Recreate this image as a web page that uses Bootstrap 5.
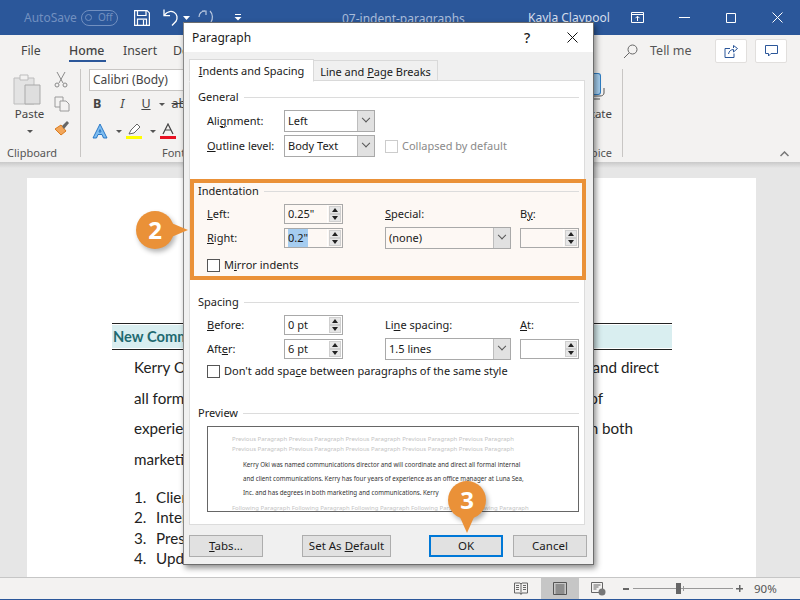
<!DOCTYPE html>
<html lang="en">
<head>
<meta charset="utf-8">
<title>Paragraph dialog</title>
<link rel="stylesheet" href="https://cdn.jsdelivr.net/npm/bootstrap@5.3.0/dist/css/bootstrap.min.css">
<style>
html,body{margin:0;height:100%;overflow:hidden}
body{font-family:"Noto Sans","Open Sans",sans-serif;font-size:11px;color:#222;background:#fff}
svg{display:block;flex:none}
.appwin{width:800px;height:600px;position:relative;overflow:hidden}
.titlebar{height:35px;background:#2b579a;color:#d5deec;font-size:12px}
.ts-auto{margin-left:24px;color:#7290c0;font-size:12px;width:57px}
.ts-toggle{width:37px;height:16px;border:1.5px solid #7290c0;border-radius:8px;color:#7290c0;font-size:10px;line-height:13px;padding-left:16px;position:relative}
.ts-toggle::before{content:"";position:absolute;left:3px;top:3px;width:7px;height:7px;border-radius:50%;border:1.5px solid #7290c0}
.ts-save{margin-left:16px}
.ts-undo{margin-left:13px}
.ts-drop{margin-left:3px}
.ts-redo{margin-left:7px}
.ts-more{margin-left:20px}
.ts-file{margin-left:100px;color:#a9bcd9;width:186px;white-space:nowrap;position:relative;top:1px}
.ts-user{width:103px;white-space:nowrap}
.ts-min{margin-left:35px}.ts-max{margin-left:36px}.ts-close{margin-left:36px}
.ribbon{height:127px;background:#f3f2f1;color:#444}
.ribtabs{height:34px;font-size:12.3px;padding-left:21px}
.ribtabs .nav-link{padding:0;color:#444;height:27px;line-height:31px;border-bottom:2px solid transparent;border-radius:0;background:none}
.ribtabs .tab-file{width:48px}
.ribtabs .tab-home{width:54px;border-bottom-color:transparent;position:relative;font-weight:500}
.ribtabs .tab-home::after{content:"";position:absolute;left:0;top:25px;width:37px;height:2px;background:#2b579a}
.ribtabs .tab-ins{width:50px}
.tellzone{margin-left:auto;padding-right:13px}
.tellme{margin-left:12px;width:57px;font-size:12.5px;color:#555}
.ribbtn{width:32px;height:24px;background:#fff;border:1px solid #e1dfdd;border-radius:2px;margin-left:8px}
.ribbody{height:88px}
.grp-clip{width:81px;border-right:1px solid #c8c6c4;padding-left:7px;flex:none}
.grp-font{width:509px;padding-left:8px;flex:none;overflow:hidden}
.grp-voice{width:33px;border-right:1px solid #c8c6c4;flex:none;text-align:right;padding-right:10px;position:relative;white-space:nowrap;direction:rtl}
.grp-rest{flex:1;padding-right:11px}
.grpname{font-size:11px;height:12px;line-height:16px;color:#555;white-space:nowrap}
.clip-top{height:76px;flex:none}
.paste-col{width:33px;margin-left:6px;text-align:center;margin-right:6px}
.paste-txt{font-size:11.5px;line-height:14px;margin-top:2px}
.tinytri{width:0;height:0;border-left:3.5px solid transparent;border-right:3.5px solid transparent;border-top:3.5px solid #555;display:inline-block}
.smalls{gap:8px;margin-left:2px;margin-top:3px}
.fontcombo{width:240px;height:22px;background:#fff;border:1px solid #c8c6c4;font-size:12px;line-height:20px;padding-left:3px;color:#444}
.fontrow1{height:24px;margin-top:1px;margin-left:4px;gap:0;font-size:12.5px}
.fontrow1 .fi{margin-left:19px}.fontrow1 .fu{margin-left:17px}.fontrow1 .tinytri{margin-left:8px}.fontrow1 .fs{margin-left:7px}
.fontrow2{margin-top:5px;margin-left:3px;height:20px}
.fb{font-weight:700}.fi{font-style:italic}
.fu{text-decoration:underline}
.fs{text-decoration:line-through}
.fontname{margin-top:4px;margin-left:73px}
.dictbtn{position:absolute;left:3px;top:4px;width:8px;height:22px;background:#a5cff0;border:1px solid #2f7ec4;border-radius:0 3px 3px 0;border-left:0}
.dictmark{position:absolute;left:3px;top:19px}
.dict-txt{margin-top:38px;font-size:11.5px;line-height:14px}
.voice-txt{margin-top:25px;font-size:11px;line-height:14px;color:#555}
.ribshadow{height:6px;background:linear-gradient(#c9c9c9,#e6e6e6);flex:none}
.docarea{height:409px;background:#e6e6e6;padding:10px 44px 0 27px}
.sheet{background:#fff;height:399px;overflow:hidden;padding-top:145px;font-family:Lato,"Liberation Sans",sans-serif;color:#222}
.dochead{margin-left:85px;width:560px;height:27px;border-top:1px solid #222;border-bottom:1px solid #222;padding-top:1px}
.dochead div{background:#d9eef0;height:23px;line-height:23px;color:#1f6a70;font-weight:700;font-size:14.7px;padding-left:1px}
.docpara{margin:2px 0 0 107px;width:525px;font-size:15.2px}
.docline{height:30.7px;line-height:30.7px}
.pad-of{margin-right:56px}.pad-both{margin-right:26px}
.doclist{margin:12px 0 0 107px;font-size:15.2px;padding:0;list-style:none}
.doclist li{height:20.4px;line-height:20.4px;display:flex}
.doclist b{font-weight:400;width:22px}
.statusbar{height:23px;background:#f3f2f1;border-top:1px solid #c6c6c6;border-bottom:1px solid #2b579a;font-size:11.5px;color:#555;padding-left:514px}
.viewsel{width:38px;height:21px;background:#c6c6c6;margin-left:13px;margin-right:12px}
.zminus{margin-left:17px}
.zslide{width:100px;height:1px;background:#999;margin:0 3px 0 4px;position:relative}
.zslide::before{content:"";position:absolute;left:43px;top:-5px;width:5px;height:11px;background:#666}
.zslide::after{content:"";position:absolute;left:50px;top:-2px;width:1px;height:5px;background:#999}
.zpct{margin-left:11px}
.dlg{position:absolute;left:183px;top:22px;width:411px;height:543px;background:#f0f0f0;border:1px solid #6d6d6d;border-left-color:#888;box-shadow:2px 3px 6px rgba(0,0,0,.45);color:#1a1a1a;font-size:11px}
.dlgtitle{height:29px;background:#fff;font-size:12px;padding-left:8px}
.dlghelp{margin-left:auto;font-size:14px;width:43px;font-weight:500}
.dlgclose{margin-right:15px}
.dlgtabs{margin:7px 0 0 5px;border:0;height:22px;flex-wrap:nowrap;position:relative;z-index:1}
.dlgtabs .nav-link{padding:0;font-size:11px;color:#1a1a1a;border:1px solid #d9d9d9;border-radius:0;background:#f0f0f0;height:21px;line-height:21px;margin:1px 0 0 -1px;width:125px;text-align:center}
.dlgtabs .nav-link.active{height:23px;margin-top:0;width:125px;margin-left:0;background:#fff;line-height:21px;border-color:#d9d9d9 #d9d9d9 #fff}
.dlgpanel{margin:-1px 0 0 5px;width:396px;height:445px;background:#fff;border:1px solid #dcdcdc;padding-top:8px}
.gsec{padding:0 5px 0 8px}
.ghead{height:16px;line-height:16px;white-space:nowrap}
.ghead::after{content:"";flex:1;height:1px;background:#dcdcdc;margin-left:5px}
.preview-head{margin-top:27px}
.frow{margin-left:9px;margin-top:4px;white-space:nowrap}
.frow.first{margin-top:5px}
.frow.tight{margin-top:3px}
.lab{width:77px;flex:none}
.colc{width:126px;margin-left:42px;flex:none}
.cold{width:59px;margin-left:9px;flex:none}
.sel{height:22px;border:1px solid #a9a9a9;background:#fff;padding-left:3px;line-height:20px;flex:none}
.colc.sel{margin-top:-1px;margin-bottom:-1px}
.sel1{width:91px}
.sel-arrow{width:17px;margin-left:auto;background:#e1e1e1;border-left:1px solid #bdbdbd;height:100%;flex:none}
.sel-arrow::before{content:"";width:6px;height:6px;border-right:1px solid #555;border-bottom:1px solid #555;transform:rotate(45deg) translate(-2px,-2px)}
.spin{width:59px;height:20px;border:1px solid #a9a9a9;background:#fff;padding-left:3px;line-height:18px;flex:none}
.spin-btns{width:15px;margin-left:auto;height:100%;border-left:1px solid #fff;padding:1px}
.spin-btns i{display:flex;align-items:center;justify-content:center;flex:1;background:#e6e6e6;border:1px solid #cfcfcf}
.spin-btns i::before{content:"";border-left:3px solid transparent;border-right:3px solid transparent}
.spin-btns i:first-child::before{border-bottom:4px solid #222}
.spin-btns i:last-child::before{border-top:4px solid #222}
.hilite{background:#a6cdf0}
.dis{color:#8a8a8a}
.cbx{width:13px;height:13px;border:1px solid #555;background:#fff;flex:none;margin-right:4px}
.cbx.off{border-color:#ccc;margin:0 0 0 10px}
.dis.lbl{margin-left:4px}
.indentbox{margin:22px -2px 14px 0;border:4px solid #ea9138;background:#fdf8f4;padding:0 3px 4px 4px;height:101px}
.indentbox .sel,.indentbox .spin{background:#fdf8f4}
.cbrow{margin-top:10px;margin-left:9px;height:14px;line-height:14px}
.cbrow.near{margin-top:5px}
.prevbox{margin:5px 0 0 9px;height:86px;border:1px solid #666;overflow:hidden;font-size:6px;padding:7px 0 0 24px;white-space:nowrap}
.pv-g{color:#c4c4c4;height:10px;line-height:10px}
.pv-t{color:#333;height:14px;line-height:14px;margin-left:11px;font-size:6.2px}
.pv-f{margin-top:3px}
.dlgbtns{margin:10px 0 0 5px;width:398px}
.dbtn{height:22px;padding:0;font-size:11.5px;line-height:20px;border:1px solid #adadad;background:#e1e1e1;border-radius:0;color:#1a1a1a;width:74px}
.dbtn.mid{width:89px;margin-left:39px}
.dbtn.okb{margin-left:38px;border:2px solid #0078d7;line-height:18px}
.dbtn.can{margin-left:10px}
.callout{position:absolute;width:38px;height:38px;border-radius:50%;background:#ea9138;color:#fff;font:700 24px/38px "Open Sans",sans-serif;text-align:center;box-shadow:2px 3px 5px rgba(0,0,0,.3)}
.callout::after{content:"";position:absolute}
.call2{left:136px;top:211px}
.call2::after{left:33px;top:11px;border-left:19px solid #ea9138;border-top:8px solid transparent;border-bottom:8px solid transparent}
.call3{left:448px;top:481px}
.call3::after{left:11px;top:34px;border-top:18px solid #ea9138;border-left:8px solid transparent;border-right:8px solid transparent}
</style>
</head>
<body>
<div class="appwin d-flex flex-column">
  <div class="titlebar d-flex align-items-center flex-none">
    <span class="ts-auto">AutoSave</span>
    <span class="ts-toggle">Off</span>
    <svg class="ts-save" width="16" height="16" viewBox="0 0 16 16" fill="none" stroke="#fff" stroke-width="1.2"><path d="M.6.6h12.5l2.3 2.3v12.5H.6z"/><path d="M3.5.8v4.7h8.5V.8M3.5 15.2v-6h9v6M9.5 10v5"/></svg>
    <svg class="ts-undo" width="17" height="17" viewBox="0 0 17 17" fill="none" stroke="#fff" stroke-width="1.3"><path d="M1 .6v6h6"/><path d="M1.2 6.2C4 2.6 8 1.6 11 3.3c3.4 2 3.8 6 2 9l-4 4.2"/></svg>
    <svg class="ts-drop" width="7" height="4" viewBox="0 0 7 4"><path d="M0 0h7L3.500 4z" fill="#fff"/></svg>
    <svg class="ts-redo" width="17" height="15" viewBox="0 0 17 15" fill="none" stroke="#b8c7df" stroke-width="1.2"><path d="M2 7C2 3 5 1 8 1"/><path d="M5 1h4V5"/><path d="M13 1c3 3 3 8 1 11"/></svg>
    <svg class="ts-more" width="8" height="7" viewBox="0 0 8 7"><path d="M1 .5h6" stroke="#fff"/><path d="M.5 3h7L4 6.500z" fill="#fff"/></svg>
    <span class="ts-file">07-indent-paragraphs</span>
    <span class="ts-user">Kayla Claypool</span>
    <svg width="13" height="11" viewBox="0 0 13 11" fill="none" stroke="#fff"><path d="M.5.500h12v10H.5zM.5 2.500h12M6.500 9V4.500M4.500 6.200l2-2 2 2"/></svg>
    <svg class="ts-min" width="11" height="1" viewBox="0 0 11 1"><path d="M0 .5h11" stroke="#fff"/></svg>
    <svg class="ts-max" width="10" height="10" viewBox="0 0 10 10"><path d="M.5.500h9v9h-9z" fill="none" stroke="#fff"/></svg>
    <svg class="ts-close" width="11" height="11" viewBox="0 0 11 11"><path d="M.5.500l10 10M10.500.500l-10 10" stroke="#fff"/></svg>
  </div>
  <div class="ribbon flex-none">
    <div class="nav ribtabs align-items-start">
      <span class="nav-link tab-file">File</span>
      <span class="nav-link tab-home">Home</span>
      <span class="nav-link tab-ins">Insert</span>
      <span class="nav-link">Design</span>
      <div class="tellzone d-flex align-items-center mt-1">
        <svg width="15" height="15" viewBox="0 0 15 15" fill="none" stroke="#666"><circle cx="9.500" cy="5.500" r="4.500"/><path d="M6 9l-5 5"/></svg>
        <span class="tellme">Tell me</span>
        <span class="ribbtn d-flex align-items-center justify-content-center"><svg width="14" height="13" viewBox="0 0 14 13" fill="none" stroke="#2b579a"><path d="M6 3.500H1V12.500H10V8.500"/><path d="M4.500 9C5 6 7 4.500 9.500 4.500V7l4-3.500-4-3V3"/></svg></span>
        <span class="ribbtn d-flex align-items-center justify-content-center"><svg width="13" height="12" viewBox="0 0 13 12" fill="none" stroke="#2b579a"><path d="M.5.500h12v8H6L3.500 11V8.500H.5z"/></svg></span>
      </div>
    </div>
    <div class="ribbody d-flex">
      <div class="grp-clip d-flex flex-column">
        <div class="clip-top d-flex">
          <div class="paste-col">
            <svg class="mt-1" width="28" height="32" viewBox="0 0 28 32"><path d="M1 5h20v26H1z" fill="#e3e3e3" stroke="#bdbdbd"/><path d="M7 2h8v5H7z" fill="#f3f2f1" stroke="#bdbdbd"/><path d="M12 12h15v19H12z" fill="#dedede" stroke="#a9a9a9"/></svg>
            <div class="paste-txt">Paste</div>
            <span class="tinytri"></span>
          </div>
          <div class="smalls d-flex flex-column">
            <svg width="14" height="16" viewBox="0 0 14 16" fill="none" stroke="#8a8a8a"><path d="M3 0l6 11M11 0L5 11"/><circle cx="3" cy="13" r="2"/><circle cx="11" cy="13" r="2"/></svg>
            <svg width="16" height="16" viewBox="0 0 16 16" fill="#f3f2f1" stroke="#9a9a9a"><path d="M1 1h8v10H1z"/><path d="M6 5h6l3 3v7H6z"/></svg>
            <svg width="16" height="16" viewBox="0 0 16 16"><path d="M1 9l6-4 5 6-5 4z" fill="#f2a65a" stroke="#d97b1e"/><path d="M8 6l5-5 2 2-5 6z" fill="#666"/></svg>
          </div>
        </div>
        <div class="grpname">Clipboard</div>
      </div>
      <div class="grp-font">
        <div class="fontcombo">Calibri (Body)</div>
        <div class="fontrow1 d-flex align-items-center">
          <span class="fb">B</span><span class="fi">I</span><span class="fu">U</span><span class="tinytri"></span><span class="fs">abc</span>
        </div>
        <div class="fontrow2 d-flex align-items-center gap-1">
          <svg width="16" height="16" viewBox="0 0 16 16"><path d="M1 15L8 1l7 14h-3.500L10 11.500H6L4.500 15zM7 9h2L8 6.500z" fill="#7fbdf0" stroke="#1b6ec2" stroke-width=".9"/></svg>
          <span class="tinytri ms-1"></span>
          <svg width="16" height="16" viewBox="0 0 16 16"><path d="M0 13h16v3H0z" fill="#ff0"/><path d="M3 11l2-4 6-6 3 3-6 6z" fill="#fff" stroke="#666"/></svg>
          <span class="tinytri ms-1"></span>
          <svg width="16" height="16" viewBox="0 0 16 16"><path d="M0 13h16v3H0z" fill="#e81123"/><path d="M3 11L8 1l5 10M5 7h6" fill="none" stroke="#444" stroke-width="1.200"/></svg>
        </div>
        <div class="grpname fontname">Font</div>
      </div>
      <div class="grp-voice">
        <span class="dictbtn"></span>
        <svg class="dictmark" width="12" height="12" viewBox="0 0 12 12" fill="none" stroke="#555"><path d="M11 0v5c0 2-2 3-4 3H0M0 11h7"/></svg>
        <div class="dict-txt">Dictate</div>
        <div class="voice-txt">Voice</div>
      </div>
      <div class="grp-rest d-flex justify-content-end align-items-end">
        <svg width="9" height="6" viewBox="0 0 9 6"><path d="M.5 5l4-4 4 4" fill="none" stroke="#777" stroke-width="1.500"/></svg>
      </div>
    </div>
  </div>
  <div class="ribshadow"></div>
  <div class="docarea flex-none">
    <div class="sheet">
      <div class="dochead"><div>New Communications Director</div></div>
      <div class="docpara">
        <div class="docline d-flex justify-content-between"><span>Kerry Oki was named</span><span>and direct</span></div>
        <div class="docline d-flex justify-content-between"><span>all formal internal</span><span class="pad-of">of</span></div>
        <div class="docline d-flex justify-content-between"><span>experience as an office</span><span class="pad-both">in both</span></div>
        <div class="docline">marketing</div>
      </div>
      <ol class="doclist">
        <li><b>1.</b>Client</li>
        <li><b>2.</b>Internal</li>
        <li><b>3.</b>Press</li>
        <li><b>4.</b>Update</li>
      </ol>
    </div>
  </div>
  <div class="statusbar d-flex align-items-center flex-none">
    <svg width="14" height="13" viewBox="0 0 14 13" fill="none" stroke="#666"><path d="M.5 1h5.500l1 1 1-1h5.500v10H8l-1 1.500L6 11H.5zM7 2v10M2 3.500h3M2 5.500h3M2 7.500h3M9 3.500h3M9 5.500h3M9 7.500h3"/></svg>
    <span class="viewsel d-flex align-items-center justify-content-center"><svg width="14" height="13" viewBox="0 0 14 13" fill="none" stroke="#555"><path d="M.5.500h13v12H.5zM2.500 3h9M2.500 5h9M2.500 7h9M2.500 9h9M2.500 11h9"/></svg></span>
    <svg width="15" height="14" viewBox="0 0 15 14"><path d="M.5.500h11v10H.5zM2.500 3h7M2.500 5h5M2.500 7h3" fill="none" stroke="#666"/><circle cx="11" cy="10" r="3.500" fill="#777"/></svg>
    <svg class="zminus" width="6" height="2" viewBox="0 0 6 2"><path d="M0 0h6v2H0z" fill="#666"/></svg>
    <span class="zslide"></span>
    <svg width="7" height="7" viewBox="0 0 7 7"><path d="M3 0h1.500v3H7v1.500H4.500V7H3V4.500H0V3h3z" fill="#666"/></svg>
    <span class="zpct">90%</span>
  </div>

  <div class="dlg d-flex flex-column">
    <div class="dlgtitle d-flex align-items-center flex-none">
      <span>Paragraph</span>
      <span class="dlghelp">?</span>
      <svg class="dlgclose" width="11" height="11" viewBox="0 0 11 11"><path d="M.5.500l10 10M10.500.500l-10 10" stroke="#111"/></svg>
    </div>
    <div class="nav dlgtabs flex-none">
      <span class="nav-link active"><u>I</u>ndents and Spacing</span>
      <span class="nav-link">Line and <u>P</u>age Breaks</span>
    </div>
    <div class="dlgpanel flex-none">
      <div class="gsec">
        <div class="ghead d-flex align-items-center">General</div>
        <div class="frow first d-flex align-items-center">
          <span class="lab">Ali<u>g</u>nment:</span>
          <span class="sel sel1 d-flex align-items-center">Left<span class="sel-arrow d-flex align-items-center justify-content-center"></span></span>
        </div>
        <div class="frow tight d-flex align-items-center">
          <span class="lab"><u>O</u>utline level:</span>
          <span class="sel sel1 d-flex align-items-center">Body Text<span class="sel-arrow d-flex align-items-center justify-content-center"></span></span>
          <span class="cbx off"></span>
          <span class="dis lbl">Collapsed by default</span>
        </div>
      </div>
      <div class="indentbox">
        <div class="ghead d-flex align-items-center">Indentation</div>
        <div class="frow first d-flex align-items-center">
          <span class="lab"><u>L</u>eft:</span>
          <span class="spin d-flex align-items-center">0.25"<span class="spin-btns d-flex flex-column"><i></i><i></i></span></span>
          <span class="colc"><u>S</u>pecial:</span>
          <span class="cold">B<u>y</u>:</span>
        </div>
        <div class="frow d-flex align-items-center">
          <span class="lab"><u>R</u>ight:</span>
          <span class="spin d-flex align-items-center"><span class="hilite">0.2"</span><span class="spin-btns d-flex flex-column"><i></i><i></i></span></span>
          <span class="colc sel d-flex align-items-center">(none)<span class="sel-arrow d-flex align-items-center justify-content-center"></span></span>
          <span class="cold spin d-flex align-items-center"><span class="spin-btns d-flex flex-column"><i></i><i></i></span></span>
        </div>
        <div class="cbrow d-flex align-items-center"><span class="cbx"></span><span>M<u>i</u>rror indents</span></div>
      </div>
      <div class="gsec">
        <div class="ghead d-flex align-items-center">Spacing</div>
        <div class="frow first d-flex align-items-center">
          <span class="lab"><u>B</u>efore:</span>
          <span class="spin d-flex align-items-center">0 pt<span class="spin-btns d-flex flex-column"><i></i><i></i></span></span>
          <span class="colc">Li<u>n</u>e spacing:</span>
          <span class="cold"><u>A</u>t:</span>
        </div>
        <div class="frow d-flex align-items-center">
          <span class="lab">Aft<u>e</u>r:</span>
          <span class="spin d-flex align-items-center">6 pt<span class="spin-btns d-flex flex-column"><i></i><i></i></span></span>
          <span class="colc sel d-flex align-items-center">1.5 lines<span class="sel-arrow d-flex align-items-center justify-content-center"></span></span>
          <span class="cold spin d-flex align-items-center"><span class="spin-btns d-flex flex-column"><i></i><i></i></span></span>
        </div>
        <div class="cbrow near d-flex align-items-center"><span class="cbx"></span><span>Don't add spa<u>c</u>e between paragraphs of the same style</span></div>
        <div class="ghead d-flex align-items-center preview-head">Preview</div>
        <div class="prevbox">
          <div class="pv-g">Previous Paragraph Previous Paragraph Previous Paragraph Previous Paragraph Previous Paragraph</div>
          <div class="pv-g">Previous Paragraph Previous Paragraph Previous Paragraph Previous Paragraph Previous Paragraph</div>
          <div class="pv-t mt-1">Kerry Oki was named communications director and will coordinate and direct all formal internal</div>
          <div class="pv-t">and client communications. Kerry has four years of experience as an office manager at Luna Sea,</div>
          <div class="pv-t">Inc. and has degrees in both marketing and communications. Kerry</div>
          <div class="pv-g pv-f">Following Paragraph Following Paragraph Following Paragraph Following Paragraph Following Paragraph</div>
        </div>
      </div>
    </div>
    <div class="dlgbtns d-flex flex-none">
      <button type="button" class="btn dbtn"><u>T</u>abs...</button>
      <button type="button" class="btn dbtn mid">Set As <u>D</u>efault</button>
      <button type="button" class="btn dbtn okb">OK</button>
      <button type="button" class="btn dbtn can">Cancel</button>
    </div>
  </div>
  <div class="callout call2">2</div>
  <div class="callout call3">3</div>
</div>
</body>
</html>
